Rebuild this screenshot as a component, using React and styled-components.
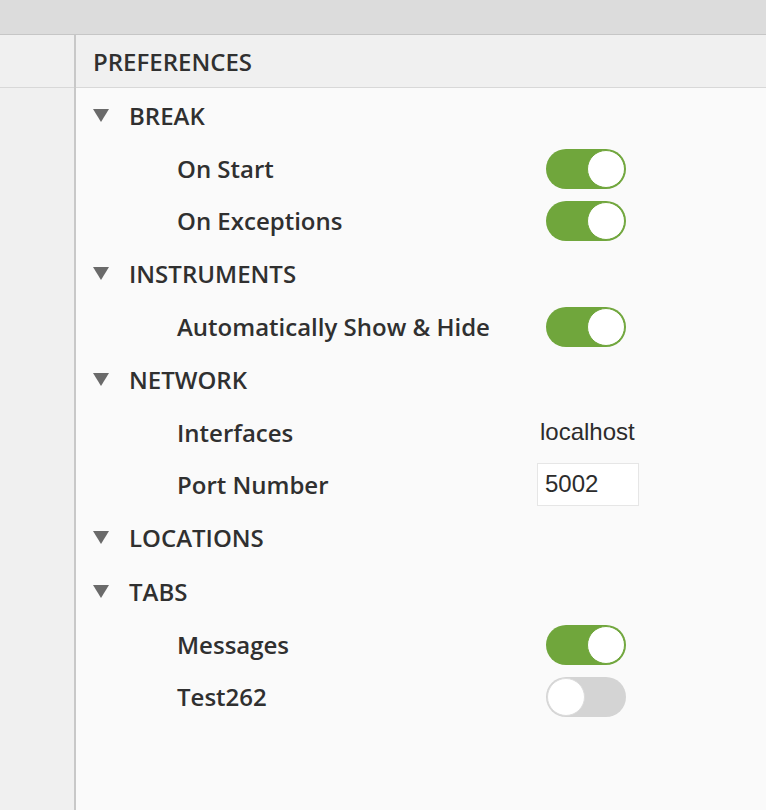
import React from "react";
import styled, { createGlobalStyle } from "styled-components";

const Global = createGlobalStyle`
  html, body { margin: 0; padding: 0; }
  body {
    font-family: "Open Sans", "DejaVu Sans", sans-serif;
    color: #303030;
    background: #fafafa;
  }
`;

const Frame = styled.div`
  display: flex;
  flex-direction: column;
  width: 766px;
  height: 810px;
  overflow: hidden;
`;

const TopBar = styled.div`
  height: 34px;
  flex: none;
  background: #dcdcdc;
  border-bottom: 1px solid #c6c6c6;
`;

const Body = styled.div`
  flex: 1;
  display: flex;
  min-height: 0;
`;

const Sidebar = styled.div`
  width: 74px;
  flex: none;
  background: #f0f0f0;
  border-right: 2px solid #c8c8c8;
  display: flex;
  flex-direction: column;
`;

const SidebarHead = styled.div`
  height: 52px;
  border-bottom: 1px solid #d8d8d8;
`;

const Panel = styled.div`
  flex: 1;
  display: flex;
  flex-direction: column;
  background: #fafafa;
`;

const PanelHead = styled.div`
  height: 52px;
  flex: none;
  display: flex;
  align-items: center;
  padding-left: 17px;
  background: #f0f0f0;
  border-bottom: 1px solid #d8d8d8;
  font-size: 24px;
  font-weight: 600;
  color: #303030;
`;

const Section = styled.div`
  display: flex;
  flex-direction: column;
`;

const SectionHead = styled.div`
  height: 54px;
  display: flex;
  align-items: center;
  padding-left: 17px;
  font-size: 24px;
  font-weight: 600;
  color: #303030;
`;

const Caret = styled.svg`
  width: 16px;
  height: 13px;
  margin-right: 20px;
  flex: none;
`;

const Row = styled.div`
  height: 52px;
  display: grid;
  grid-template-columns: 360px auto;
  align-items: center;
  padding-left: 101px;
`;

const Label = styled.span`
  font-size: 24px;
  font-weight: 600;
  color: #303030;
`;

const Value = styled.span`
  font-family: "Liberation Sans", Arial, sans-serif;
  font-size: 24px;
  color: #2c2c2c;
  padding-left: 3px;
`;

const NumberInput = styled.div`
  box-sizing: border-box;
  width: 102px;
  height: 43px;
  display: flex;
  align-items: center;
  padding-left: 7px;
  background: #ffffff;
  border: 1px solid #e6e6e6;
  font-family: "Liberation Sans", Arial, sans-serif;
  font-size: 24px;
  color: #2c2c2c;
`;

const Track = styled.div`
  box-sizing: border-box;
  margin: 2px 0 0 9px;
  width: 80px;
  height: 40px;
  border-radius: 20px;
  padding: 1px;
  display: flex;
  align-items: center;
  justify-content: ${(p) => (p.$on ? "flex-end" : "flex-start")};
  background: ${(p) => (p.$on ? "#70a63c" : "#d4d4d4")};
`;

const Knob = styled.div`
  box-sizing: border-box;
  width: 38px;
  height: 38px;
  border-radius: 50%;
  background: #ffffff;
  border: 1.5px solid ${(p) => (p.$on ? "#70a63c" : "#dcdcdc")};
`;

const Toggle = ({ on }) => (
  <Track $on={on}>
    <Knob $on={on} />
  </Track>
);

const SectionTitle = ({ children }) => (
  <SectionHead>
    <Caret viewBox="0 0 16 13">
      <polygon points="0,0 16,0 8,13" fill="#6a6a6a" />
    </Caret>
    {children}
  </SectionHead>
);

const sections = [
  {
    title: "BREAK",
    rows: [
      { label: "On Start", toggle: true },
      { label: "On Exceptions", toggle: true },
    ],
  },
  {
    title: "INSTRUMENTS",
    rows: [{ label: "Automatically Show & Hide", toggle: true }],
  },
  {
    title: "NETWORK",
    rows: [
      { label: "Interfaces", text: "localhost" },
      { label: "Port Number", input: "5002" },
    ],
  },
  { title: "LOCATIONS", rows: [] },
  {
    title: "TABS",
    rows: [
      { label: "Messages", toggle: true },
      { label: "Test262", toggle: false },
    ],
  },
];

export default function App() {
  return (
    <>
      <Global />
      <Frame>
        <TopBar />
        <Body>
          <Sidebar>
            <SidebarHead />
          </Sidebar>
          <Panel>
            <PanelHead>PREFERENCES</PanelHead>
            {sections.map((s) => (
              <Section key={s.title}>
                <SectionTitle>{s.title}</SectionTitle>
                {s.rows.map((r) => (
                  <Row key={r.label}>
                    <Label>{r.label}</Label>
                    {"toggle" in r && <Toggle on={r.toggle} />}
                    {r.text && <Value>{r.text}</Value>}
                    {r.input && <NumberInput>{r.input}</NumberInput>}
                  </Row>
                ))}
              </Section>
            ))}
          </Panel>
        </Body>
      </Frame>
    </>
  );
}
